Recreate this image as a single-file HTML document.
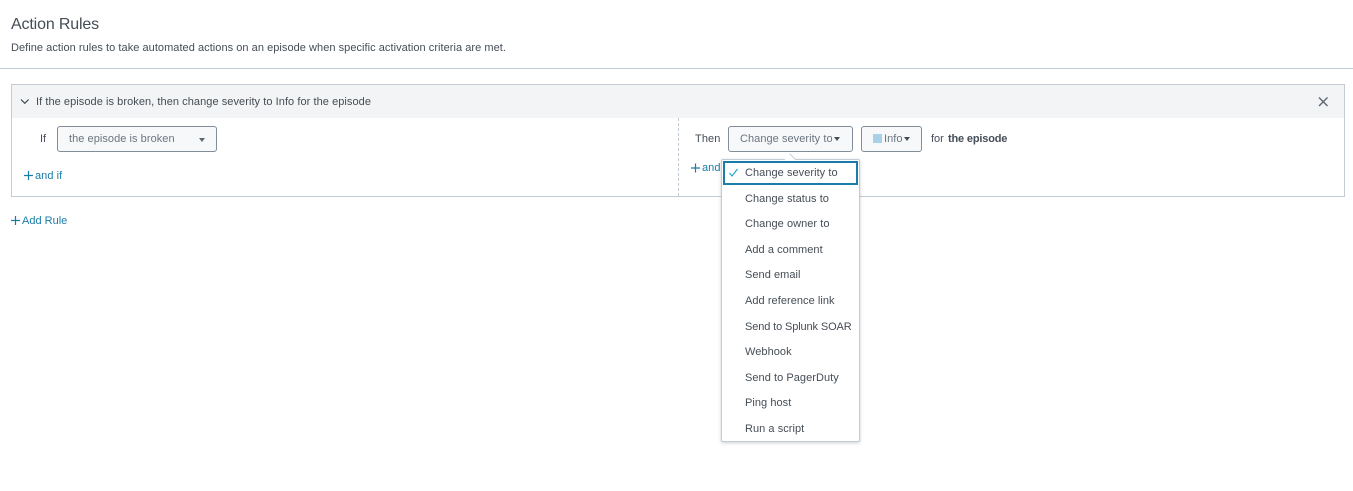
<!DOCTYPE html>
<html><head><meta charset="utf-8"><style>
html,body{margin:0;padding:0;background:#fff}
#p{position:relative;width:1353px;height:491px;overflow:hidden;background:#fff;font-family:"Liberation Sans",sans-serif;font-size:11px;color:#454d56}
.t{position:absolute;white-space:nowrap;line-height:14px}
.b{position:absolute;box-sizing:border-box}
.btn{border:1px solid #818d99;border-radius:3px;background:#f7f8fa}
.l{color:#1a7ca8}
.g{color:#6b7580}
.m{letter-spacing:.05px}
svg{position:absolute;overflow:visible}
</style></head><body><div id="p">
<div class="t" style="left:11px;top:16px;font-size:16px;line-height:18px;letter-spacing:-.15px">Action Rules</div>
<div class="t" style="left:11px;top:41px;font-size:11px;letter-spacing:.045px">Define action rules to take automated actions on an episode when specific activation criteria are met.</div>
<div class="b" style="left:0;top:68px;width:1353px;height:1px;background:#c3cbd4"></div>

<div class="b" style="left:11px;top:84px;width:1334px;height:113px;border:1px solid #c3cbd4"></div>
<div class="b" style="left:12px;top:85px;width:1332px;height:33px;background:#f2f4f5"></div>
<svg style="left:0;top:0" width="1353" height="491">
<path d="M21 99.5l3.8 3.8 3.8-3.8" fill="none" stroke="#3c444d" stroke-width="1.2"/>
<path d="M1319 97.5l8.5 8.5M1327.5 97.5l-8.5 8.5" fill="none" stroke="#5c6773" stroke-width="1.4"/>
<path d="M24 175.5h9M28.5 171v9" fill="none" stroke="#1a7ca8" stroke-width="1.2"/>
<path d="M11 220.5h9M15.5 216v9" fill="none" stroke="#1a7ca8" stroke-width="1.2"/>
<path d="M691 168h9M695.5 163.5v9" fill="none" stroke="#1a7ca8" stroke-width="1.2"/>
<path d="M678.5 118v78" fill="none" stroke="#c3cbd4" stroke-dasharray="3 2"/>
</svg>
<div class="t" style="left:36px;top:95px;letter-spacing:.06px">If the episode is broken, then change severity to Info for the episode</div>

<div class="t" style="left:40px;top:132px">If</div>
<div class="b btn" style="left:57px;top:126px;width:160px;height:26px"></div>
<div class="t g m" style="left:69px;top:132px">the episode is broken</div>
<div class="b" style="left:199px;top:138px;border:3.5px solid transparent;border-top:4px solid #5c6773;border-bottom:0"></div>
<div class="t l m" style="left:35px;top:169px">and if</div>
<div class="t l" style="left:22px;top:214px">Add Rule</div>

<div class="t" style="left:695px;top:132px;letter-spacing:.1px">Then</div>
<div class="b btn" style="left:728px;top:126px;width:125px;height:26px"></div>
<div class="t g m" style="left:740px;top:132px">Change severity to</div>
<div class="b" style="left:834px;top:137px;border:3.5px solid transparent;border-top:4px solid #454d56;border-bottom:0"></div>
<div class="b btn" style="left:861px;top:126px;width:61px;height:26px"></div>
<div class="b" style="left:873px;top:134px;width:9px;height:9px;background:#a8d0e6"></div>
<div class="t g m" style="left:884px;top:132px">Info</div>
<div class="b" style="left:904px;top:137px;border:3.5px solid transparent;border-top:4px solid #454d56;border-bottom:0"></div>
<div class="t" style="left:931px;top:132px">for</div>
<div class="t" style="left:948px;top:132px;font-weight:bold;letter-spacing:-.17px">the episode</div>
<div class="t l m" style="left:702px;top:161px">and</div>

<div class="b" style="left:721px;top:159px;width:139px;height:283px;background:#fff;border:1px solid #c3cbd4;border-radius:2px;box-shadow:0 1px 3px rgba(60,68,77,.25)"></div>
<div class="b" style="left:786px;top:155px;width:8px;height:8px;background:#fff;transform:rotate(45deg);border-top:1px solid #c3cbd4"></div>
<div class="b" style="left:723px;top:161px;width:135px;height:24px;background:#fff;border:2px solid #1a7ca8"></div>
<svg style="left:0;top:0" width="1353" height="491"><path d="M729.5 173l2.5 3 5.5-7" fill="none" stroke="#1a9fd6" stroke-width="1.1"/></svg>
<div class="t m" style="left:745px;top:166px">Change severity to</div>
<div class="t m" style="left:745px;top:192px">Change status to</div>
<div class="t m" style="left:745px;top:217px">Change owner to</div>
<div class="t m" style="left:745px;top:243px">Add a comment</div>
<div class="t m" style="left:745px;top:268px">Send email</div>
<div class="t m" style="left:745px;top:294px">Add reference link</div>
<div class="t" style="left:745px;top:320px;letter-spacing:-.12px">Send to Splunk SOAR</div>
<div class="t m" style="left:745px;top:345px">Webhook</div>
<div class="t m" style="left:745px;top:371px">Send to PagerDuty</div>
<div class="t m" style="left:745px;top:396px">Ping host</div>
<div class="t m" style="left:745px;top:422px">Run a script</div>
</div></body></html>
